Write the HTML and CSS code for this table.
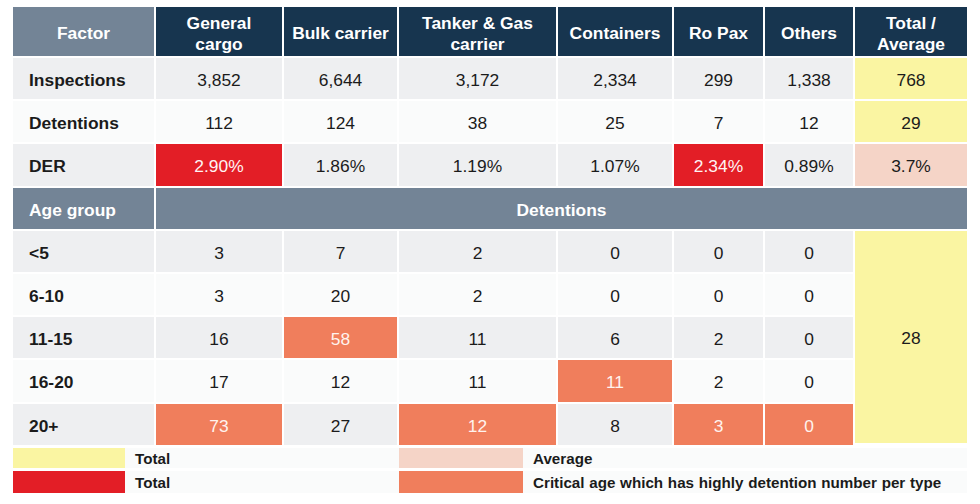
FILE: index.html
```html
<!DOCTYPE html>
<html lang="en">
<head>
<meta charset="utf-8">
<title>Detentions by ship type and age</title>
<link rel="stylesheet" href="styles.css">
</head>
<body>
<div class="page">
  <div class="table">
    <div class="cell head slate">Factor</div>
    <div class="cell head navy">General<br>cargo</div>
    <div class="cell head navy">Bulk carrier</div>
    <div class="cell head navy">Tanker &amp; Gas<br>carrier</div>
    <div class="cell head navy">Containers</div>
    <div class="cell head navy">Ro Pax</div>
    <div class="cell head navy">Others</div>
    <div class="cell head navy">Total /<br>Average</div>

    <div class="cell label grey">Inspections</div>
    <div class="cell grey">3,852</div>
    <div class="cell grey">6,644</div>
    <div class="cell grey">3,172</div>
    <div class="cell grey">2,334</div>
    <div class="cell grey">299</div>
    <div class="cell grey">1,338</div>
    <div class="cell yellow">768</div>

    <div class="cell label light">Detentions</div>
    <div class="cell light">112</div>
    <div class="cell light">124</div>
    <div class="cell light">38</div>
    <div class="cell light">25</div>
    <div class="cell light">7</div>
    <div class="cell light">12</div>
    <div class="cell yellow">29</div>

    <div class="cell label grey">DER</div>
    <div class="cell red">2.90%</div>
    <div class="cell grey">1.86%</div>
    <div class="cell grey">1.19%</div>
    <div class="cell grey">1.07%</div>
    <div class="cell red">2.34%</div>
    <div class="cell grey">0.89%</div>
    <div class="cell pink">3.7%</div>

    <div class="cell head slate label">Age group</div>
    <div class="cell head slate span7">Detentions</div>

    <div class="cell label grey">&lt;5</div>
    <div class="cell grey">3</div>
    <div class="cell grey">7</div>
    <div class="cell grey">2</div>
    <div class="cell grey">0</div>
    <div class="cell grey">0</div>
    <div class="cell grey">0</div>
    <div class="cell yellow total-age">28</div>

    <div class="cell label light">6-10</div>
    <div class="cell light">3</div>
    <div class="cell light">20</div>
    <div class="cell light">2</div>
    <div class="cell light">0</div>
    <div class="cell light">0</div>
    <div class="cell light">0</div>

    <div class="cell label grey">11-15</div>
    <div class="cell grey">16</div>
    <div class="cell orange">58</div>
    <div class="cell grey">11</div>
    <div class="cell grey">6</div>
    <div class="cell grey">2</div>
    <div class="cell grey">0</div>

    <div class="cell label light">16-20</div>
    <div class="cell light">17</div>
    <div class="cell light">12</div>
    <div class="cell light">11</div>
    <div class="cell orange">11</div>
    <div class="cell light">2</div>
    <div class="cell light">0</div>

    <div class="cell label grey">20+</div>
    <div class="cell orange">73</div>
    <div class="cell grey">27</div>
    <div class="cell orange">12</div>
    <div class="cell grey">8</div>
    <div class="cell orange">3</div>
    <div class="cell orange">0</div>
  </div>

  <div class="legend">
    <div class="swatch yellow-sw"></div>
    <div class="legend-text">Total</div>
    <div class="swatch pink-sw"></div>
    <div class="legend-text">Average</div>

    <div class="swatch red-sw"></div>
    <div class="legend-text">Total</div>
    <div class="swatch orange-sw"></div>
    <div class="legend-text">Critical age which has highly detention number per type</div>
  </div>
</div>
</body>
</html>
```

FILE: styles.css
```css
html, body {
  margin: 0;
  padding: 0;
  background: #ffffff;
}

.page {
  padding: 7px 0 0 13px;
  width: 954px;
  font-family: "Liberation Sans", Arial, sans-serif;
  color: #1b1b1b;
}

.table {
  display: grid;
  grid-template-columns: 141px 126px 113px 157px 114px 89px 88px 112px;
  grid-template-rows: 49px repeat(9, 41.2px);
  gap: 2px;
}

.cell {
  display: flex;
  align-items: center;
  justify-content: center;
  text-align: center;
  font-size: 17.4px;
  line-height: 21px;
  padding-top: 4px;
  box-sizing: border-box;
}

.head {
  color: #ffffff;
  font-weight: bold;
}

.navy { background: #17354f; }
.slate { background: #738496; }
.grey { background: #eeeff1; }
.light { background: #fafbfb; }
.yellow { background: #faf5a2; }
.pink { background: #f5d4c7; }
.red { background: #e31e26; color: #fff3f3; }
.orange { background: #f07e5c; color: #fff3ee; }

.label {
  justify-content: flex-start;
  padding-left: 16px;
  font-weight: bold;
}

.span7 {
  grid-column: span 7;
}

.total-age {
  grid-column: 8;
  grid-row: 6 / span 5;
  margin-bottom: 2px;
}

.legend {
  display: grid;
  grid-template-columns: 112px 274px 124px 444px;
  grid-template-rows: 20px 22px;
  row-gap: 3px;
  margin-top: 3px;
}

.swatch {
  height: 100%;
}

.yellow-sw { background: #faf5a2; }
.pink-sw { background: #f5d4c7; }
.red-sw { background: #e31e26; }
.orange-sw { background: #f07e5c; }

.legend-text {
  background: #fafbfb;
  display: flex;
  align-items: center;
  padding: 2px 0 0 10px;
  box-sizing: border-box;
  font-size: 15.2px;
  word-spacing: 0.5px;
  font-weight: bold;
  color: #1b1b1b;
}
```
